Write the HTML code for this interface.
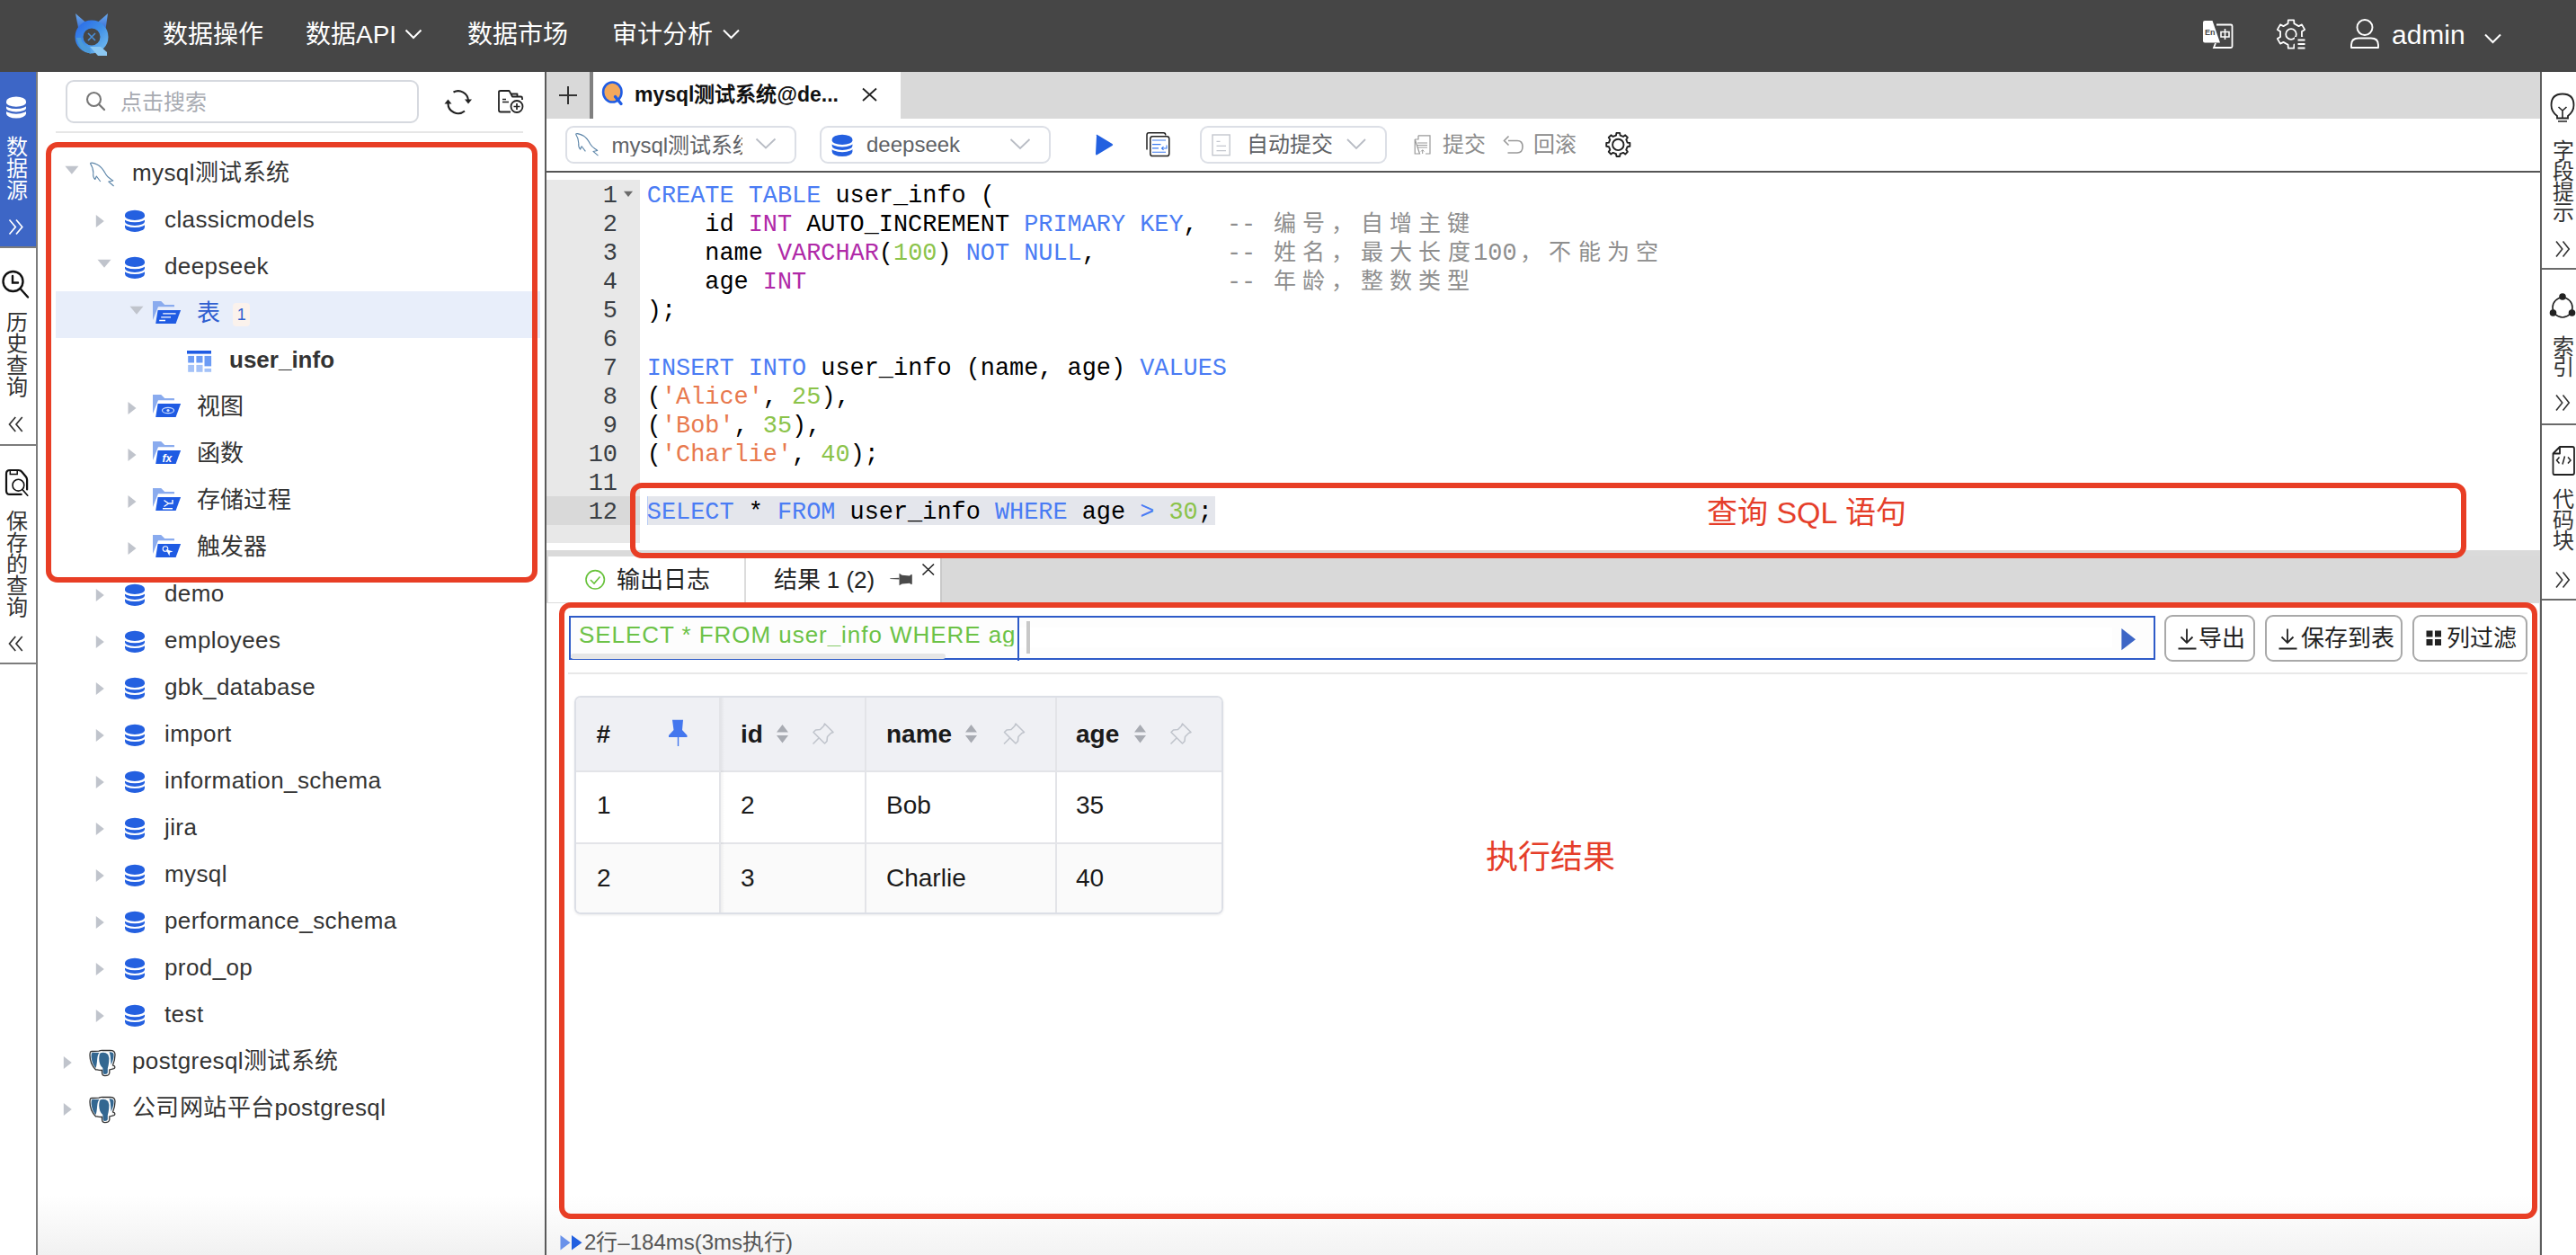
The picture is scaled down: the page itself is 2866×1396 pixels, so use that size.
<!DOCTYPE html>
<html lang="zh-CN"><head><meta charset="utf-8">
<style>
*{box-sizing:border-box;margin:0;padding:0}
html,body{width:2866px;height:1396px;overflow:hidden;background:#fff;font-family:"Liberation Sans",sans-serif;color:#333}
.a{position:absolute}
svg{position:absolute;overflow:visible}
.t{position:absolute;white-space:pre;line-height:1}
#hdr{left:0;top:0;width:2866px;height:80px;background:#464646}
.nav{color:#fff;font-size:28px;top:25px}
.vt{position:absolute;left:-1px;width:40px;text-align:center;font-size:24px;line-height:24px;white-space:normal;word-break:break-all}
.tx{position:absolute;font-size:26px;letter-spacing:0.4px;color:#333;white-space:pre;line-height:26px}
.code{position:absolute;left:719.8px;font-family:"Liberation Mono",monospace;font-size:26.88px;line-height:32px;white-space:pre;color:#000}
.ln{position:absolute;left:608px;width:79px;text-align:right;font-family:"Liberation Mono",monospace;font-size:26.95px;line-height:32px;color:#3a3f45}
.kw{color:#4a7cf4}.ty{color:#b02aa8}.nm{color:#8bc34a}.st{color:#e8794e}.cm{color:#8e8e8e}
.cj{display:inline-block;width:32.26px;text-align:center;font-size:25px}
.redbox{position:absolute;border:6px solid #e83e25}
</style></head><body>

<!-- HEADER -->
<div id="hdr" class="a"></div>
<svg style="left:0;top:0" width="2866" height="80">
 <defs>
  <linearGradient id="lg1" x1="0" y1="0" x2="1" y2="1"><stop offset="0" stop-color="#2d6fe8"/><stop offset="0.5" stop-color="#3f8fe6"/><stop offset="1" stop-color="#6db6ee"/></linearGradient>
  <linearGradient id="lg2" x1="0" y1="0" x2="0" y2="1"><stop offset="0" stop-color="#6aa9ec"/><stop offset="1" stop-color="#2f62d0"/></linearGradient>
 </defs>
 <path d="M84 15 L99 28 L88 36 Z" fill="url(#lg2)"/>
 <path d="M120 15 L105 28 L117 36 Z" fill="url(#lg2)"/>
 <circle cx="102" cy="41" r="14" fill="none" stroke="url(#lg1)" stroke-width="9"/>
 <path d="M100 52 L112 52 L119 58 L119 62 L109 62 Z" fill="#8cc8f2"/>
 <path d="M85 42 Q88 56 101 60 L100 54 Q91 50 90 42Z" fill="#4b9ad8"/>
 <path d="M98 37 L106 45 M106 37 L98 45" stroke="#4a8fd8" stroke-width="1.6"/>
 <path d="M451.5 33.5 L460 42 L468.5 33.5" fill="none" stroke="#fff" stroke-width="2"/>
 <path d="M805 33.5 L813.5 42 L822 33.5" fill="none" stroke="#fff" stroke-width="2"/>
 <path d="M2765 38.5 L2773.5 47 L2782 38.5" fill="none" stroke="#fff" stroke-width="2"/>
 <!-- En/zh icon -->
 <path d="M2451 25 Q2451 23 2453 23 L2461.5 23 L2470 47.5 L2453 47.5 Q2451 47.5 2451 45.5Z" fill="#fff"/>
 <text x="2453" y="38.5" font-size="9" font-weight="bold" fill="#464646" font-family="Liberation Sans">En</text>
 <path d="M2466 27.5 L2482 27.5 Q2483.5 27.5 2483.5 29 L2483.5 51.5 Q2483.5 53 2482 53 L2463 53 L2465 48" fill="none" stroke="#fff" stroke-width="1.8"/>
 <path d="M2471 35.5 h9 v5.5 h-9z M2475.5 32 v12" fill="none" stroke="#fff" stroke-width="1.6"/>
 <!-- gear with lines -->
 <path d="M2545.57 26.19 L2545.84 22.32 L2552.16 22.32 L2552.43 26.19 L2557.51 29.12 L2561.00 27.42 L2564.16 32.90 L2560.94 35.07 L2560.94 40.93 L2564.16 43.10 L2561.00 48.58 L2557.51 46.88 L2552.43 49.81 L2552.16 53.68 L2545.84 53.68 L2545.57 49.81 L2540.49 46.88 L2537.00 48.58 L2533.84 43.10 L2537.06 40.93 L2537.06 35.07 L2533.84 32.90 L2537.00 27.42 L2540.49 29.12Z" fill="none" stroke="#fff" stroke-width="1.8" stroke-linejoin="round"/>
 <circle cx="2549" cy="38" r="5.8" fill="none" stroke="#fff" stroke-width="1.8"/>
 <rect x="2553" y="41" width="14" height="15" fill="#464646"/>
 <path d="M2556.5 44.5 h8 M2556.5 49 h8 M2556.5 53.5 h8" stroke="#fff" stroke-width="1.8"/>
 <!-- user -->
 <circle cx="2631" cy="30.5" r="8.5" fill="none" stroke="#fff" stroke-width="1.9"/>
 <path d="M2616 53 L2616 50 Q2616 42.5 2624 42.5 L2638 42.5 Q2646 42.5 2646 50 L2646 53 Z" fill="none" stroke="#fff" stroke-width="1.9" stroke-linejoin="round"/>
</svg>
<div class="t nav" style="left:181px">数据操作</div>
<div class="t nav" style="left:340px">数据API</div>
<div class="t nav" style="left:520px">数据市场</div>
<div class="t nav" style="left:681px">审计分析</div>
<div class="t" style="left:2661px;top:24px;font-size:30px;color:#fff">admin</div>

<div class="a" style="left:0;top:80px;width:40px;height:194px;background:#3d66c6"></div>
<div class="a" style="left:40px;top:80px;width:2px;height:1316px;background:#7c7c7c"></div>
<div class="a" style="left:0;top:273.8px;width:40px;height:2px;background:#7c7c7c"></div>
<div class="a" style="left:0;top:494px;width:40px;height:2px;background:#7c7c7c"></div>
<div class="a" style="left:0;top:737px;width:40px;height:2px;background:#7c7c7c"></div>
<svg style="left:0;top:0" width="42" height="1396"><g transform="translate(7,107.5)"><path d="M0 5.206611570247934 A11.0 5.206611570247934 0 0 1 22 5.206611570247934 L22 18.793388429752067 A11.0 5.206611570247934 0 0 1 0 18.793388429752067 Z" fill="#fff"/><path d="M-1 7.140495867768595 A12.0 5.206611570247934 0 0 0 23 7.140495867768595" fill="none" stroke="#3d66c6" stroke-width="2.3801652892561984"/><path d="M-1 12.94214876033058 A12.0 5.206611570247934 0 0 0 23 12.94214876033058" fill="none" stroke="#3d66c6" stroke-width="2.181818181818182"/></g><path d="M10.5 244.5 L17.25 252.5 L10.5 260.5 M18.0 244.5 L24.75 252.5 L18.0 260.5" fill="none" stroke="#fff" stroke-width="1.7"/><circle cx="14.5" cy="313" r="11" fill="none" stroke="#111" stroke-width="2.4"/><path d="M14 307 L14 314.5 L20 314.5" fill="none" stroke="#111" stroke-width="2.4" stroke-linecap="round"/><path d="M22.5 321 L31 330.5" stroke="#111" stroke-width="2.4" stroke-linecap="round"/><path d="M17.25 464 L10.5 472.0 L17.25 480 M24.75 464 L18.0 472.0 L24.75 480" fill="none" stroke="#333" stroke-width="1.7"/><path d="M23.7 549.9 L11 549.9 Q7 549.9 7 545.9 L7 527 Q7 523 11 523 L20.5 523 Q23 523 24.5 525 L29 530.5 Q30.1 532 30.1 534 L30.1 544.4" fill="none" stroke="#111" stroke-width="2.2" stroke-linecap="round" stroke-linejoin="round"/><path d="M11.3 523.5 L11.3 527.6 L19.2 527.6 L19.2 523.5" fill="none" stroke="#111" stroke-width="1.5"/><circle cx="20.4" cy="539.7" r="6.4" fill="none" stroke="#111" stroke-width="1.6"/><path d="M25 544.6 L30.8 551.2" stroke="#111" stroke-width="1.6" stroke-linecap="round"/><path d="M17.25 708 L10.5 716.0 L17.25 724 M24.75 708 L18.0 716.0 L24.75 724" fill="none" stroke="#333" stroke-width="1.7"/></svg>
<div class="vt" style="top:152px;color:#fff">数据源</div>
<div class="vt" style="top:347px;color:#333">历史查询</div>
<div class="vt" style="top:568px;color:#333">保存的查询</div>
<div class="a" style="left:62px;top:324px;width:539px;height:51.5px;background:#e8eefa"></div>
<div class="a" style="left:606px;top:80px;width:2px;height:1316px;background:#5a5a5a"></div>
<div class="a" style="left:42px;top:1330px;width:564px;height:66px;background:linear-gradient(#fff,#f1f1f1)"></div>
<div class="a" style="left:72.5px;top:88.5px;width:393px;height:48.5px;border:2px solid #d6d9df;border-radius:9px"></div>
<div class="t" style="left:134px;top:101.5px;font-size:24px;color:#a8abb2">点击搜索</div>
<div class="a" style="left:62px;top:146px;width:520px;height:2px;background:#e6e6e6"></div>
<svg style="left:0;top:0" width="606" height="1396"><circle cx="104.5" cy="110.5" r="7.5" fill="none" stroke="#777" stroke-width="2.1"/><path d="M110 116 L116 122" stroke="#777" stroke-width="2.3" stroke-linecap="round"/><path d="M504.5 102.5 A11.3 11.3 0 0 1 521 111.5" fill="none" stroke="#222" stroke-width="2.1"/><path d="M517 110.5 L525 110.5 L521 115.5Z" fill="#222"/><path d="M517 123.5 A11.3 11.3 0 0 1 498.5 114.5" fill="none" stroke="#222" stroke-width="2.1"/><path d="M494.5 115.5 L502.5 115.5 L498.5 110.5Z" fill="#222"/><path d="M568 124.5 L557 124.5 Q555 124.5 555 122.5 L555 102.5 Q555 101 557 101 L566.5 101 L568.5 104.5 L575.5 104.5 L575.5 107.5 M568.5 104.5 L570 107.5 L579.5 107.5 Q581 107.5 581 109 L581 111" fill="none" stroke="#222" stroke-width="1.8" stroke-linejoin="round"/><path d="M559 110.5 h4 M559 113.5 h7" stroke="#222" stroke-width="1.6"/><circle cx="575" cy="118.5" r="6.5" fill="#fff" stroke="#222" stroke-width="1.8"/><path d="M571.5 118.5 h7 M575 115 v7" stroke="#222" stroke-width="1.7"/><path d="M72.4 184.8 L87.4 184.8 L79.9 193.8Z" fill="#c0c4cc"/><path transform="translate(99.8,180.5) scale(1.0)" d="M0.5 1 C2.5 0 6 1.2 10 3.5 C14 6 16 10 18 13.5 C19.5 16.5 22 17.5 26 20.5 L21 21.5 L26.8 26.5 M0.5 1 C2.5 4 4 8 4 12 C3.5 15 4 17 6 19 L7.5 15.5 L12 21.5" fill="none" stroke="#5b84a8" stroke-width="1.1" stroke-linejoin="round"/><path d="M106.8 239.0 L115.8 246 L106.8 253.0Z" fill="#c0c4cc"/><g transform="translate(139,233.7)"><path d="M0 5.25 A11.0 5.25 0 0 1 22 5.25 L22 18.95 A11.0 5.25 0 0 1 0 18.95 Z" fill="#2460e0"/><path d="M-1 7.2 A12.0 5.25 0 0 0 23 7.2" fill="none" stroke="#fff" stroke-width="2.4"/><path d="M-1 13.05 A12.0 5.25 0 0 0 23 13.05" fill="none" stroke="#fff" stroke-width="2.2"/></g><path d="M108.5 288.8 L123.5 288.8 L116 297.8Z" fill="#c0c4cc"/><g transform="translate(139,285.7)"><path d="M0 5.25 A11.0 5.25 0 0 1 22 5.25 L22 18.95 A11.0 5.25 0 0 1 0 18.95 Z" fill="#2460e0"/><path d="M-1 7.2 A12.0 5.25 0 0 0 23 7.2" fill="none" stroke="#fff" stroke-width="2.4"/><path d="M-1 13.05 A12.0 5.25 0 0 0 23 13.05" fill="none" stroke="#fff" stroke-width="2.2"/></g><path d="M144.5 340.8 L159.5 340.8 L152 349.8Z" fill="#c0c4cc"/><g transform="translate(170,335.0)"><path d="M0 0 L9.2 0 L13.2 4 L23.6 4 Q24 4 24 4.5 L24 6.3 L6 6.3 L0 21Z" fill="#8aabee"/><path d="M5.6 9.9 L31.1 9.9 L25.6 25 L3.2 25Z" fill="#1f5be3" stroke="#fff" stroke-width="0" /><path d="M0 20.7 L0 0" stroke="#8aabee" stroke-width="0"/><path d="M11.2 13.9 L25.6 13.9 M9.2 17.9 L20 17.9 M7.2 21.5 L14 21.5" stroke="#fff" stroke-width="1.3"/></g><g transform="translate(208,390)"><rect x="0" y="0" width="27" height="3.6" fill="#1f5be3"/><rect x="1.2" y="5.9" width="6.8" height="7.6" fill="#6b9bf5"/><rect x="10.4" y="5.9" width="7.1" height="7.6" fill="#6b9bf5"/><rect x="19.5" y="5.9" width="7.6" height="11.5" fill="#6b9bf5"/><rect x="1.2" y="15.9" width="6.8" height="7.9" fill="#a4c2f8"/><rect x="10.4" y="15.9" width="7.1" height="7.9" fill="#a4c2f8"/><rect x="19.5" y="19.9" width="7.6" height="3.9" fill="#a4c2f8"/></g><path d="M142.5 447.0 L151.5 454 L142.5 461.0Z" fill="#c0c4cc"/><g transform="translate(170,439.0)"><path d="M0 0 L9.2 0 L13.2 4 L23.6 4 Q24 4 24 4.5 L24 6.3 L6 6.3 L0 21Z" fill="#8aabee"/><path d="M5.6 9.9 L31.1 9.9 L25.6 25 L3.2 25Z" fill="#1f5be3" stroke="#fff" stroke-width="0" /><path d="M0 20.7 L0 0" stroke="#8aabee" stroke-width="0"/><ellipse cx="17" cy="17.5" rx="6.5" ry="3.2" fill="none" stroke="#cfe0ff" stroke-width="1.2"/><circle cx="17" cy="17.5" r="1.6" fill="#cfe0ff"/></g><path d="M142.5 499.0 L151.5 506 L142.5 513.0Z" fill="#c0c4cc"/><g transform="translate(170,491.0)"><path d="M0 0 L9.2 0 L13.2 4 L23.6 4 Q24 4 24 4.5 L24 6.3 L6 6.3 L0 21Z" fill="#8aabee"/><path d="M5.6 9.9 L31.1 9.9 L25.6 25 L3.2 25Z" fill="#1f5be3" stroke="#fff" stroke-width="0" /><path d="M0 20.7 L0 0" stroke="#8aabee" stroke-width="0"/><text x="10.5" y="22.5" font-size="12" font-weight="bold" font-style="italic" fill="#fff" font-family="Liberation Sans">fx</text></g><path d="M142.5 551.0 L151.5 558 L142.5 565.0Z" fill="#c0c4cc"/><g transform="translate(170,543.0)"><path d="M0 0 L9.2 0 L13.2 4 L23.6 4 Q24 4 24 4.5 L24 6.3 L6 6.3 L0 21Z" fill="#8aabee"/><path d="M5.6 9.9 L31.1 9.9 L25.6 25 L3.2 25Z" fill="#1f5be3" stroke="#fff" stroke-width="0" /><path d="M0 20.7 L0 0" stroke="#8aabee" stroke-width="0"/><path d="M12.5 13.5 L17.5 17 L12.5 20.5 M17.5 17 L22 17 L22 13 M11 22.8 L22 22.8" fill="none" stroke="#fff" stroke-width="1.4"/></g><path d="M142.5 603.0 L151.5 610 L142.5 617.0Z" fill="#c0c4cc"/><g transform="translate(170,595.0)"><path d="M0 0 L9.2 0 L13.2 4 L23.6 4 Q24 4 24 4.5 L24 6.3 L6 6.3 L0 21Z" fill="#8aabee"/><path d="M5.6 9.9 L31.1 9.9 L25.6 25 L3.2 25Z" fill="#1f5be3" stroke="#fff" stroke-width="0" /><path d="M0 20.7 L0 0" stroke="#8aabee" stroke-width="0"/><circle cx="14" cy="15.5" r="2.8" fill="none" stroke="#fff" stroke-width="1.1"/><path d="M14.5 16 L22.5 18.5 L19 19.5 L18.5 23.5Z" fill="#fff"/></g><path d="M106.8 655.0 L115.8 662 L106.8 669.0Z" fill="#c0c4cc"/><g transform="translate(139,649.7)"><path d="M0 5.25 A11.0 5.25 0 0 1 22 5.25 L22 18.95 A11.0 5.25 0 0 1 0 18.95 Z" fill="#2460e0"/><path d="M-1 7.2 A12.0 5.25 0 0 0 23 7.2" fill="none" stroke="#fff" stroke-width="2.4"/><path d="M-1 13.05 A12.0 5.25 0 0 0 23 13.05" fill="none" stroke="#fff" stroke-width="2.2"/></g><path d="M106.8 707.0 L115.8 714 L106.8 721.0Z" fill="#c0c4cc"/><g transform="translate(139,701.7)"><path d="M0 5.25 A11.0 5.25 0 0 1 22 5.25 L22 18.95 A11.0 5.25 0 0 1 0 18.95 Z" fill="#2460e0"/><path d="M-1 7.2 A12.0 5.25 0 0 0 23 7.2" fill="none" stroke="#fff" stroke-width="2.4"/><path d="M-1 13.05 A12.0 5.25 0 0 0 23 13.05" fill="none" stroke="#fff" stroke-width="2.2"/></g><path d="M106.8 759.0 L115.8 766 L106.8 773.0Z" fill="#c0c4cc"/><g transform="translate(139,753.7)"><path d="M0 5.25 A11.0 5.25 0 0 1 22 5.25 L22 18.95 A11.0 5.25 0 0 1 0 18.95 Z" fill="#2460e0"/><path d="M-1 7.2 A12.0 5.25 0 0 0 23 7.2" fill="none" stroke="#fff" stroke-width="2.4"/><path d="M-1 13.05 A12.0 5.25 0 0 0 23 13.05" fill="none" stroke="#fff" stroke-width="2.2"/></g><path d="M106.8 811.0 L115.8 818 L106.8 825.0Z" fill="#c0c4cc"/><g transform="translate(139,805.7)"><path d="M0 5.25 A11.0 5.25 0 0 1 22 5.25 L22 18.95 A11.0 5.25 0 0 1 0 18.95 Z" fill="#2460e0"/><path d="M-1 7.2 A12.0 5.25 0 0 0 23 7.2" fill="none" stroke="#fff" stroke-width="2.4"/><path d="M-1 13.05 A12.0 5.25 0 0 0 23 13.05" fill="none" stroke="#fff" stroke-width="2.2"/></g><path d="M106.8 863.0 L115.8 870 L106.8 877.0Z" fill="#c0c4cc"/><g transform="translate(139,857.7)"><path d="M0 5.25 A11.0 5.25 0 0 1 22 5.25 L22 18.95 A11.0 5.25 0 0 1 0 18.95 Z" fill="#2460e0"/><path d="M-1 7.2 A12.0 5.25 0 0 0 23 7.2" fill="none" stroke="#fff" stroke-width="2.4"/><path d="M-1 13.05 A12.0 5.25 0 0 0 23 13.05" fill="none" stroke="#fff" stroke-width="2.2"/></g><path d="M106.8 915.0 L115.8 922 L106.8 929.0Z" fill="#c0c4cc"/><g transform="translate(139,909.7)"><path d="M0 5.25 A11.0 5.25 0 0 1 22 5.25 L22 18.95 A11.0 5.25 0 0 1 0 18.95 Z" fill="#2460e0"/><path d="M-1 7.2 A12.0 5.25 0 0 0 23 7.2" fill="none" stroke="#fff" stroke-width="2.4"/><path d="M-1 13.05 A12.0 5.25 0 0 0 23 13.05" fill="none" stroke="#fff" stroke-width="2.2"/></g><path d="M106.8 967.0 L115.8 974 L106.8 981.0Z" fill="#c0c4cc"/><g transform="translate(139,961.7)"><path d="M0 5.25 A11.0 5.25 0 0 1 22 5.25 L22 18.95 A11.0 5.25 0 0 1 0 18.95 Z" fill="#2460e0"/><path d="M-1 7.2 A12.0 5.25 0 0 0 23 7.2" fill="none" stroke="#fff" stroke-width="2.4"/><path d="M-1 13.05 A12.0 5.25 0 0 0 23 13.05" fill="none" stroke="#fff" stroke-width="2.2"/></g><path d="M106.8 1019.0 L115.8 1026 L106.8 1033.0Z" fill="#c0c4cc"/><g transform="translate(139,1013.7)"><path d="M0 5.25 A11.0 5.25 0 0 1 22 5.25 L22 18.95 A11.0 5.25 0 0 1 0 18.95 Z" fill="#2460e0"/><path d="M-1 7.2 A12.0 5.25 0 0 0 23 7.2" fill="none" stroke="#fff" stroke-width="2.4"/><path d="M-1 13.05 A12.0 5.25 0 0 0 23 13.05" fill="none" stroke="#fff" stroke-width="2.2"/></g><path d="M106.8 1071.0 L115.8 1078 L106.8 1085.0Z" fill="#c0c4cc"/><g transform="translate(139,1065.7)"><path d="M0 5.25 A11.0 5.25 0 0 1 22 5.25 L22 18.95 A11.0 5.25 0 0 1 0 18.95 Z" fill="#2460e0"/><path d="M-1 7.2 A12.0 5.25 0 0 0 23 7.2" fill="none" stroke="#fff" stroke-width="2.4"/><path d="M-1 13.05 A12.0 5.25 0 0 0 23 13.05" fill="none" stroke="#fff" stroke-width="2.2"/></g><path d="M106.8 1123.0 L115.8 1130 L106.8 1137.0Z" fill="#c0c4cc"/><g transform="translate(139,1117.7)"><path d="M0 5.25 A11.0 5.25 0 0 1 22 5.25 L22 18.95 A11.0 5.25 0 0 1 0 18.95 Z" fill="#2460e0"/><path d="M-1 7.2 A12.0 5.25 0 0 0 23 7.2" fill="none" stroke="#fff" stroke-width="2.4"/><path d="M-1 13.05 A12.0 5.25 0 0 0 23 13.05" fill="none" stroke="#fff" stroke-width="2.2"/></g><path d="M70.8 1175.0 L79.8 1182 L70.8 1189.0Z" fill="#c0c4cc"/><g transform="translate(100,1168)"><path d="M1.5 1.5 L10 1.2 Q12 0.3 14 0.5 L22.5 0.4 Q28 0.5 28 5 Q28 11 25.5 17 L27.5 18 Q28.6 20.3 26 20.8 L21.8 22 L21.8 25.5 Q21.5 28.6 16.8 28.6 Q13.5 28.6 13.5 25 L13.5 22.5 Q10 22.5 8 21.8 L6.4 21.8 Q0 15 0 6 Q0 1.5 1.5 1.5Z" fill="#fff" stroke="#333" stroke-width="1.3"/><path d="M2.8 2.8 Q1.5 3 1.6 8 Q2.5 16 6.5 20 Q7.5 18 8.2 10 Q8.6 5 10.5 3Z" fill="#336791"/><path d="M11.8 3.2 Q17 2 20.2 5 Q21.8 8 21.2 13 Q20.8 17 19.8 20.5 L19.8 25.3 Q19.3 27 16.8 27 Q14.6 27 14.5 25.3 L14.3 20 Q10.5 17 10.2 10 Q10.2 5 11.8 3.2Z" fill="#336791"/><path d="M21.5 2.2 Q26.3 1.8 26.5 5 Q26.8 10 23.6 16.5 Q23.3 11 22.8 7 Q22.4 4 21.5 2.2Z" fill="#336791"/><path d="M24 18.5 Q26 19 26.5 19.8" stroke="#fff" stroke-width="1"/></g><path d="M70.8 1227.0 L79.8 1234 L70.8 1241.0Z" fill="#c0c4cc"/><g transform="translate(100,1220)"><path d="M1.5 1.5 L10 1.2 Q12 0.3 14 0.5 L22.5 0.4 Q28 0.5 28 5 Q28 11 25.5 17 L27.5 18 Q28.6 20.3 26 20.8 L21.8 22 L21.8 25.5 Q21.5 28.6 16.8 28.6 Q13.5 28.6 13.5 25 L13.5 22.5 Q10 22.5 8 21.8 L6.4 21.8 Q0 15 0 6 Q0 1.5 1.5 1.5Z" fill="#fff" stroke="#333" stroke-width="1.3"/><path d="M2.8 2.8 Q1.5 3 1.6 8 Q2.5 16 6.5 20 Q7.5 18 8.2 10 Q8.6 5 10.5 3Z" fill="#336791"/><path d="M11.8 3.2 Q17 2 20.2 5 Q21.8 8 21.2 13 Q20.8 17 19.8 20.5 L19.8 25.3 Q19.3 27 16.8 27 Q14.6 27 14.5 25.3 L14.3 20 Q10.5 17 10.2 10 Q10.2 5 11.8 3.2Z" fill="#336791"/><path d="M21.5 2.2 Q26.3 1.8 26.5 5 Q26.8 10 23.6 16.5 Q23.3 11 22.8 7 Q22.4 4 21.5 2.2Z" fill="#336791"/><path d="M24 18.5 Q26 19 26.5 19.8" stroke="#fff" stroke-width="1"/></g></svg>
<div class="tx" style="left:147px;top:179px">mysql测试系统</div>
<div class="tx" style="left:183px;top:231px">classicmodels</div>
<div class="tx" style="left:183px;top:283px">deepseek</div>
<div class="tx" style="left:218.5px;top:335px;color:#2f5fd0">表</div>
<div class="a" style="left:259.3px;top:336.6px;width:18.7px;height:26.2px;background:#fbf2ec;border-radius:4px;color:#2f5fd0;font-size:18px;text-align:center;line-height:26px">1</div>
<div class="tx" style="left:255px;top:387px;font-weight:bold;letter-spacing:0">user_info</div>
<div class="tx" style="left:218.5px;top:439px">视图</div>
<div class="tx" style="left:218.5px;top:491px">函数</div>
<div class="tx" style="left:218.5px;top:543px">存储过程</div>
<div class="tx" style="left:218.5px;top:595px">触发器</div>
<div class="tx" style="left:183px;top:647px">demo</div>
<div class="tx" style="left:183px;top:699px">employees</div>
<div class="tx" style="left:183px;top:751px">gbk_database</div>
<div class="tx" style="left:183px;top:803px">import</div>
<div class="tx" style="left:183px;top:855px">information_schema</div>
<div class="tx" style="left:183px;top:907px">jira</div>
<div class="tx" style="left:183px;top:959px">mysql</div>
<div class="tx" style="left:183px;top:1011px">performance_schema</div>
<div class="tx" style="left:183px;top:1063px">prod_op</div>
<div class="tx" style="left:183px;top:1115px">test</div>
<div class="tx" style="left:147px;top:1167px">postgresql测试系统</div>
<div class="tx" style="left:147px;top:1219px">公司网站平台postgresql</div>
<div class="redbox" style="left:51px;top:157.5px;width:547px;height:490px;border-radius:13px"></div>
<div class="a" style="left:608px;top:80px;width:2218px;height:52px;background:#d9d9d9"></div>
<div class="a" style="left:656px;top:80px;width:4px;height:52px;background:#808080"></div>
<div class="a" style="left:660px;top:80px;width:342px;height:52px;background:#fff"></div>
<div class="t" style="left:706px;top:94px;font-size:23px;font-weight:bold;color:#111">mysql测试系统@de...</div>
<div class="a" style="left:608px;top:190px;width:2218px;height:2px;background:#555"></div>
<div class="a" style="left:628.7px;top:139.5px;width:257.29999999999995px;height:42.5px;border:2px solid #dcdfe6;border-radius:9px"></div>
<div class="a" style="left:911.5px;top:139.5px;width:257.5px;height:42.5px;border:2px solid #dcdfe6;border-radius:9px"></div>
<div class="a" style="left:1334.7px;top:139.5px;width:208.29999999999995px;height:42.5px;border:2px solid #dcdfe6;border-radius:9px"></div>
<div class="t" style="left:680.5px;top:149.5px;font-size:24px;color:#606266;width:145px;overflow:hidden">mysql测试系统统</div>
<div class="t" style="left:964px;top:149px;font-size:24px;color:#606266">deepseek</div>
<div class="t" style="left:1387px;top:149px;font-size:24px;color:#606266">自动提交</div>
<div class="t" style="left:1604.5px;top:149px;font-size:24px;color:#8c8c8c">提交</div>
<div class="t" style="left:1705.5px;top:149px;font-size:24px;color:#8c8c8c">回滚</div>
<div class="a" style="left:608px;top:200px;width:104px;height:404px;background:#e8e8e8"></div>
<div class="a" style="left:608px;top:552px;width:104px;height:32px;background:#d9d9d9"></div>
<div class="a" style="left:720px;top:552px;width:631.5px;height:32px;background:#e4e6ec;border-left:1px solid #b9cdf5"></div>
<div class="ln" style="top:202px">1</div>
<div class="code" style="top:202px"><span class="kw">CREATE</span> <span class="kw">TABLE</span> user_info (</div>
<div class="ln" style="top:234px">2</div>
<div class="code" style="top:234px">    id <span class="ty">INT</span> AUTO_INCREMENT <span class="kw">PRIMARY</span> <span class="kw">KEY</span>,  <span class="cm">-- <span class="cj">编</span><span class="cj">号</span><span class="cj" style="text-align:left;padding-left:3px">，</span><span class="cj">自</span><span class="cj">增</span><span class="cj">主</span><span class="cj">键</span></span></div>
<div class="ln" style="top:266px">3</div>
<div class="code" style="top:266px">    name <span class="ty">VARCHAR</span>(<span class="nm">100</span>) <span class="kw">NOT</span> <span class="kw">NULL</span>,         <span class="cm">-- <span class="cj">姓</span><span class="cj">名</span><span class="cj" style="text-align:left;padding-left:3px">，</span><span class="cj">最</span><span class="cj">大</span><span class="cj">长</span><span class="cj">度</span>100<span class="cj" style="text-align:left;padding-left:3px">，</span><span class="cj">不</span><span class="cj">能</span><span class="cj">为</span><span class="cj">空</span></span></div>
<div class="ln" style="top:298px">4</div>
<div class="code" style="top:298px">    age <span class="ty">INT</span>                             <span class="cm">-- <span class="cj">年</span><span class="cj">龄</span><span class="cj" style="text-align:left;padding-left:3px">，</span><span class="cj">整</span><span class="cj">数</span><span class="cj">类</span><span class="cj">型</span></span></div>
<div class="ln" style="top:330px">5</div>
<div class="code" style="top:330px">);</div>
<div class="ln" style="top:362px">6</div>
<div class="ln" style="top:394px">7</div>
<div class="code" style="top:394px"><span class="kw">INSERT</span> <span class="kw">INTO</span> user_info (name, age) <span class="kw">VALUES</span></div>
<div class="ln" style="top:426px">8</div>
<div class="code" style="top:426px">(<span class="st">'Alice'</span>, <span class="nm">25</span>),</div>
<div class="ln" style="top:458px">9</div>
<div class="code" style="top:458px">(<span class="st">'Bob'</span>, <span class="nm">35</span>),</div>
<div class="ln" style="top:490px">10</div>
<div class="code" style="top:490px">(<span class="st">'Charlie'</span>, <span class="nm">40</span>);</div>
<div class="ln" style="top:522px">11</div>
<div class="ln" style="top:554px">12</div>
<div class="code" style="top:554px"><span class="kw">SELECT</span> * <span class="kw">FROM</span> user_info <span class="kw">WHERE</span> age <span class="kw">&gt;</span> <span class="nm">30</span>;</div>
<div class="t" style="left:1899px;top:553px;font-size:34px;color:#e53e2a">查询 SQL 语句</div>
<div class="a" style="left:608px;top:612px;width:2218px;height:58px;background:#d9d9d9"></div>
<div class="a" style="left:608px;top:612px;width:2218px;height:7px;background:#dadada"></div>
<div class="a" style="left:1045.5px;top:619px;width:2px;height:50.6px;background:#c9c9c9"></div>
<div class="a" style="left:609.7px;top:619px;width:218.3px;height:50.6px;background:#fff"></div>
<div class="a" style="left:828px;top:619px;width:2px;height:50.6px;background:#dcdcdc"></div>
<div class="a" style="left:830px;top:619px;width:215.5px;height:50.6px;background:#fff"></div>
<div class="t" style="left:685.5px;top:632px;font-size:26px;color:#222">输出日志</div>
<div class="t" style="left:860.5px;top:632px;font-size:26px;color:#222">结果 1 (2)</div>
<div class="a" style="left:608px;top:669.6px;width:2218px;height:1px;background:#dcdcdc"></div>
<div class="a" style="left:608px;top:1330px;width:2218px;height:66px;background:linear-gradient(#fff,#f3f3f3)"></div>
<div class="a" style="left:632.6px;top:684.8px;width:1765.2px;height:49.7px;border:2px solid #2e5bc8;background:#fdfdfd"></div>
<div class="a" style="left:1132px;top:685px;width:2px;height:49.5px;background:#2e5bc8"></div>
<div class="a" style="left:1134px;top:698px;width:1216px;height:22px;background:#fff"></div>
<div class="a" style="left:635px;top:726.8px;width:417px;height:6px;background:#e6e6e6;border-radius:3px"></div>
<div class="a" style="left:1142px;top:691px;width:4px;height:36px;background:#c8c8c8"></div>
<div class="t" style="left:644px;top:693px;font-size:26px;letter-spacing:0.95px;color:#6cc247;width:487px;overflow:hidden">SELECT * FROM user_info WHERE age &gt; 30;</div>
<div class="a" style="left:2408px;top:684px;width:101.40000000000009px;height:51.8px;border:2px solid #a9a9a9;border-radius:9px"></div>
<div class="a" style="left:2520.4px;top:684px;width:153.0999999999999px;height:51.8px;border:2px solid #a9a9a9;border-radius:9px"></div>
<div class="a" style="left:2684px;top:684px;width:128px;height:51.8px;border:2px solid #a9a9a9;border-radius:9px"></div>
<div class="t" style="left:2446px;top:697px;font-size:26px;color:#222">导出</div>
<div class="t" style="left:2560px;top:697px;font-size:26px;color:#222">保存到表</div>
<div class="t" style="left:2722px;top:697px;font-size:26px;color:#222">列过滤</div>
<div class="a" style="left:632px;top:748px;width:2180px;height:2px;background:#e8e8e8"></div>
<div class="a" style="left:639px;top:774px;width:721.6px;height:242.7px;border:2px solid #dcdfe6;border-radius:7px;box-shadow:0 1px 3px rgba(0,0,0,0.08);overflow:hidden"><div class="a" style="left:0;top:0;width:718px;height:81px;background:#eff0f4"></div><div class="a" style="left:0;top:82.5px;width:718px;height:78px;background:#fff"></div><div class="a" style="left:0;top:161px;width:718px;height:80px;background:#fafafa"></div></div>
<div class="a" style="left:641px;top:856.5px;width:718px;height:2px;background:#e3e4e8"></div>
<div class="a" style="left:641px;top:936.5px;width:718px;height:2px;background:#e3e4e8"></div>
<div class="a" style="left:799.8px;top:776px;width:2px;height:239px;background:#e3e4e8"></div>
<div class="a" style="left:962px;top:776px;width:2px;height:239px;background:#e3e4e8"></div>
<div class="a" style="left:1174px;top:776px;width:2px;height:239px;background:#e3e4e8"></div>
<div class="a" style="left:801.8px;top:776px;width:4px;height:239px;background:linear-gradient(90deg,rgba(0,0,0,0.05),rgba(0,0,0,0))"></div>
<div class="t" style="left:663.5px;top:803px;font-size:28px;font-weight:bold;color:#1a1a1a">#</div>
<div class="t" style="left:824px;top:803px;font-size:28px;font-weight:bold;color:#1a1a1a">id</div>
<div class="t" style="left:986px;top:803px;font-size:28px;font-weight:bold;color:#1a1a1a">name</div>
<div class="t" style="left:1197px;top:803px;font-size:28px;font-weight:bold;color:#1a1a1a">age</div>
<div class="t" style="left:664px;top:882px;font-size:28px;color:#1a1a1a">1</div>
<div class="t" style="left:824px;top:882px;font-size:28px;color:#1a1a1a">2</div>
<div class="t" style="left:986px;top:882px;font-size:28px;color:#1a1a1a">Bob</div>
<div class="t" style="left:1197px;top:882px;font-size:28px;color:#1a1a1a">35</div>
<div class="t" style="left:664px;top:962.5px;font-size:28px;color:#1a1a1a">2</div>
<div class="t" style="left:824px;top:962.5px;font-size:28px;color:#1a1a1a">3</div>
<div class="t" style="left:986px;top:962.5px;font-size:28px;color:#1a1a1a">Charlie</div>
<div class="t" style="left:1197px;top:962.5px;font-size:28px;color:#1a1a1a">40</div>
<div class="t" style="left:1652.5px;top:935.5px;font-size:36px;color:#e53e2a">执行结果</div>
<div class="redbox" style="left:700.6px;top:536.5px;width:2043px;height:84.8px;border-radius:13px"></div>
<div class="redbox" style="left:621.5px;top:669.7px;width:2201px;height:686.3px;border-radius:13px"></div>
<div class="t" style="left:650px;top:1370px;font-size:24px;color:#555">2行–184ms(3ms执行)</div>
<div class="a" style="left:2826px;top:80px;width:2px;height:1316px;background:#5f5f5f"></div>
<div class="a" style="left:2824.6px;top:670px;width:1.4px;height:726px;background:#e0e0e0"></div>
<div class="a" style="left:2828px;top:297.5px;width:38px;height:2px;background:#6a6a6a"></div>
<div class="a" style="left:2828px;top:470.5px;width:38px;height:2px;background:#6a6a6a"></div>
<div class="a" style="left:2828px;top:665.5px;width:38px;height:2px;background:#6a6a6a"></div>
<div style="position:absolute;left:2833px;width:38px;text-align:center;font-size:24px;line-height:23.2px;color:#333;white-space:normal;word-break:break-all;top:155.5px">字段提示</div>
<div style="position:absolute;left:2833px;width:38px;text-align:center;font-size:24px;line-height:23.2px;color:#333;white-space:normal;word-break:break-all;top:373.5px">索引</div>
<div style="position:absolute;left:2833px;width:38px;text-align:center;font-size:24px;line-height:23.2px;color:#333;white-space:normal;word-break:break-all;top:544px">代码块</div>
<svg style="left:0;top:0" width="2866" height="1396"><path d="M622 106 h20 M632 96 v20" stroke="#333" stroke-width="2"/><ellipse cx="681.3" cy="102.5" rx="10.2" ry="11" fill="#f2a85c" stroke="#1f5ce4" stroke-width="2.6"/><path d="M684.5 107.5 L691 115.5" stroke="#1f5ce4" stroke-width="3.4" stroke-linecap="round"/><path d="M960 98.5 L975 112 M975 98.5 L960 112" stroke="#222" stroke-width="1.8"/><path transform="translate(640,148) scale(0.95)" d="M0.5 1 C2.5 0 6 1.2 10 3.5 C14 6 16 10 18 13.5 C19.5 16.5 22 17.5 26 20.5 L21 21.5 L26.8 26.5 M0.5 1 C2.5 4 4 8 4 12 C3.5 15 4 17 6 19 L7.5 15.5 L12 21.5" fill="none" stroke="#5b84a8" stroke-width="1.1578947368421053" stroke-linejoin="round"/><path d="M841.5 154.5 L852 164.5 L862.5 154.5" fill="none" stroke="#b8bcc4" stroke-width="1.8"/><g transform="translate(925.7,149.7)"><path d="M0 5.2716942148760335 A11.35 5.2716942148760335 0 0 1 22.7 5.2716942148760335 L22.7 19.02830578512397 A11.35 5.2716942148760335 0 0 1 0 19.02830578512397 Z" fill="#2460e0"/><path d="M-1 7.2297520661157035 A12.35 5.2716942148760335 0 0 0 23.7 7.2297520661157035" fill="none" stroke="#fff" stroke-width="2.409917355371901"/><path d="M-1 13.103925619834714 A12.35 5.2716942148760335 0 0 0 23.7 13.103925619834714" fill="none" stroke="#fff" stroke-width="2.2090909090909094"/></g><path d="M1124.5 155 L1135 165 L1145.5 155" fill="none" stroke="#b8bcc4" stroke-width="1.8"/><path d="M1499 155 L1509 165 L1519 155" fill="none" stroke="#b8bcc4" stroke-width="1.8"/><path d="M1220 151 Q1219 149.5 1220.5 149.8 L1237.5 160 Q1239 161 1237.5 162 L1220.5 172.2 Q1219 173 1219 171Z" fill="#2260e0"/><path d="M1276 166.5 L1276 150 Q1276 147.8 1278.2 147.8 L1294.5 147.8 Q1296.8 147.8 1296.8 150.5" fill="none" stroke="#222" stroke-width="1.5"/><rect x="1279.8" y="151.7" width="21" height="21.8" rx="2.6" fill="#fff" stroke="#222" stroke-width="1.5"/><path d="M1282 156 h15 M1282 160.6 h9.5 M1282 164.9 h7 M1282 169.2 h15" stroke="#3a7af0" stroke-width="1.1"/><path d="M1298 161.5 v3.5 h-5.5 M1294.5 163.2 l-2 1.8 l2 1.8" fill="none" stroke="#3a7af0" stroke-width="1.1"/><rect x="1349" y="150" width="19.2" height="22.7" fill="none" stroke="#c4c7ce" stroke-width="1.4"/><path d="M1353.5 157.3 h4 M1353.5 162.3 h10.5 M1353.5 167.6 h10.5" stroke="#c4c7ce" stroke-width="1.3"/><path d="M1578 150.8 L1591 150.8 L1591 171 L1586 171 M1579.5 171 L1574.2 171 L1574.2 155 Z M1578 150.8 L1578 155 L1574.2 155" fill="none" stroke="#999" stroke-width="1.2"/><path d="M1577 159 h11 M1577 161.5 h11 M1577 164 h11" stroke="#999" stroke-width="1.2"/><path d="M1582.7 171 v-4 M1581 168.5 l1.7 -1.8 l1.7 1.8" fill="none" stroke="#999" stroke-width="1"/><path d="M1678 156.5 L1688 156.5 Q1694 156.5 1694 163 Q1694 170 1688 170 L1677.5 170" fill="none" stroke="#999" stroke-width="1.6"/><path d="M1678.5 151.5 L1673.5 156.5 L1678.5 161.5" fill="none" stroke="#999" stroke-width="1.6"/><path d="M1797.99 150.56 L1798.44 147.83 L1802.16 147.83 L1802.61 150.56 L1805.98 151.95 L1808.23 150.34 L1810.86 152.97 L1809.25 155.22 L1810.64 158.59 L1813.37 159.04 L1813.37 162.76 L1810.64 163.21 L1809.25 166.58 L1810.86 168.83 L1808.23 171.46 L1805.98 169.85 L1802.61 171.24 L1802.16 173.97 L1798.44 173.97 L1797.99 171.24 L1794.62 169.85 L1792.37 171.46 L1789.74 168.83 L1791.35 166.58 L1789.96 163.21 L1787.23 162.76 L1787.23 159.04 L1789.96 158.59 L1791.35 155.22 L1789.74 152.97 L1792.37 150.34 L1794.62 151.95Z" fill="none" stroke="#222" stroke-width="1.9" stroke-linejoin="round"/><circle cx="1800.3" cy="160.9" r="6.2" fill="none" stroke="#222" stroke-width="1.9"/><path d="M694 212.7 L704 212.7 L699 219Z" fill="#6b6b6b"/><circle cx="662.2" cy="644.8" r="10.2" fill="none" stroke="#67c23a" stroke-width="1.6"/><path d="M657 645 L661 649 L667.5 641.5" fill="none" stroke="#67c23a" stroke-width="1.6"/><path d="M990.3 643.3 L1000.5 642.8 L1000.5 644.6 L990.3 644.1Z" fill="#555"/><path d="M1000.5 637.8 L1003.5 639.8 L1012 640.6 L1014 638.8 L1014.8 639.5 L1014.8 649.5 L1014 650.3 L1012 648.8 L1003.5 649.6 L1000.5 651.2Z" fill="#4a4a4a"/><path d="M1026.5 627.5 L1039 639.5 M1039 627.5 L1026.5 639.5" stroke="#222" stroke-width="1.6"/><path d="M2360.4 699 L2376 711.2 L2360.4 723.3Z" fill="#3d66c6"/><path d="M2433 699.5 v15 M2426.5 708.5 L2433 715 L2439.5 708.5 M2423.5 721.5 h20" fill="none" stroke="#222" stroke-width="1.8"/><path d="M2545 699.5 v15 M2538.5 708.5 L2545 715 L2551.5 708.5 M2535.5 721.5 h20" fill="none" stroke="#222" stroke-width="1.8"/><rect x="2699.5" y="701.5" width="7" height="7" fill="#222"/><rect x="2709" y="701.5" width="7" height="7" fill="#222"/><rect x="2699.5" y="711" width="7" height="7" fill="#222"/><rect x="2709" y="711" width="7" height="7" fill="#222"/><path d="M864 814.5 L877 814.5 L870.5 806Z M864 818 L877 818 L870.5 826.5Z" fill="#a8abb2"/><path d="M1074 814.5 L1087 814.5 L1080.5 806Z M1074 818 L1087 818 L1080.5 826.5Z" fill="#a8abb2"/><path d="M1262 814.5 L1275 814.5 L1268.5 806Z M1262 818 L1275 818 L1268.5 826.5Z" fill="#a8abb2"/><g transform="translate(904,804)" fill="none" stroke="#c0c4cc" stroke-width="1.6" stroke-linejoin="round"><path d="M13.5 1 L23 10.5 L20.5 11.5 L16.5 15.5 L16 20.5 L13.5 23 L1 10.5 L3.5 8 L8.5 7.5 L12.5 3.5Z"/><path d="M7 17 L0.5 23.5"/></g><g transform="translate(1116.5,804)" fill="none" stroke="#c0c4cc" stroke-width="1.6" stroke-linejoin="round"><path d="M13.5 1 L23 10.5 L20.5 11.5 L16.5 15.5 L16 20.5 L13.5 23 L1 10.5 L3.5 8 L8.5 7.5 L12.5 3.5Z"/><path d="M7 17 L0.5 23.5"/></g><g transform="translate(1302,804)" fill="none" stroke="#c0c4cc" stroke-width="1.6" stroke-linejoin="round"><path d="M13.5 1 L23 10.5 L20.5 11.5 L16.5 15.5 L16 20.5 L13.5 23 L1 10.5 L3.5 8 L8.5 7.5 L12.5 3.5Z"/><path d="M7 17 L0.5 23.5"/></g><path d="M748 800.8 L760 800.8 L759 812 L764.5 818 L764.5 820 L755.2 820 L755.2 830 L753.8 830 L753.8 820 L744 820 L744 818 L749.5 812Z" fill="#4477ee"/><path d="M623.5 1374 L634.5 1382.3 L623.5 1390.6Z" fill="#6a92ea"/><path d="M636 1374 L647.5 1382.3 L636 1390.6Z" fill="#2260e0"/><path d="M2844 268.5 L2850.75 277.0 L2844 285.5 M2851.5 268.5 L2858.25 277.0 L2851.5 285.5" fill="none" stroke="#333" stroke-width="1.6"/><path d="M2844 439.5 L2850.75 448.0 L2844 456.5 M2851.5 439.5 L2858.25 448.0 L2851.5 456.5" fill="none" stroke="#333" stroke-width="1.6"/><path d="M2844 636.5 L2850.75 645.0 L2844 653.5 M2851.5 636.5 L2858.25 645.0 L2851.5 653.5" fill="none" stroke="#333" stroke-width="1.6"/><path d="M2845 129 Q2838.5 124 2838.5 117 Q2838.5 104.5 2851 104.5 Q2863.5 104.5 2863.5 117 Q2863.5 124 2857 129 L2857 131.5 L2845 131.5Z" fill="none" stroke="#222" stroke-width="1.8"/><path d="M2846 135 h10 M2846.5 119 L2851 123 L2855.5 119 M2851 123 v8" fill="none" stroke="#222" stroke-width="1.6"/><circle cx="2851" cy="342" r="11" fill="none" stroke="#222" stroke-width="1.6"/><circle cx="2851" cy="330" r="3.8" fill="#222"/><circle cx="2840.5" cy="348" r="3.8" fill="#222"/><circle cx="2861.5" cy="348" r="3.8" fill="#222"/><path d="M2848 497 L2862 497 Q2864 497 2864 499 L2864 526 Q2864 528 2862 528 L2842 528 Q2840.5 528 2840.5 526 L2840.5 504.5Z M2848 497 L2848 504.5 L2840.5 504.5" fill="none" stroke="#222" stroke-width="1.8" stroke-linejoin="round"/><path d="M2847.5 508.5 L2844.5 512 L2847.5 515.5 M2857 508.5 L2860 512 L2857 515.5 M2853.5 507.5 L2851 516.5" fill="none" stroke="#222" stroke-width="1.5"/></svg>
</body></html>
